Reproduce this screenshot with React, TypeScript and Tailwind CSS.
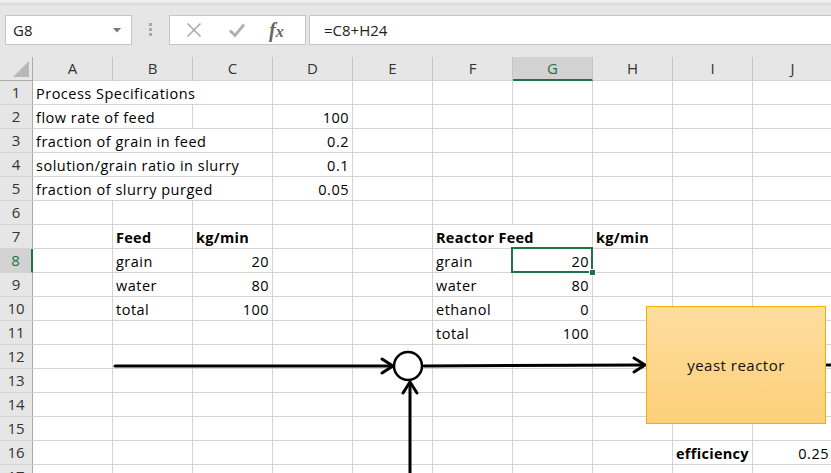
import React from 'react'

type Cell = {
  col: number
  span?: number
  text: string
  align?: 'left' | 'right'
  bold?: boolean
}

const COLS = ['A', 'B', 'C', 'D', 'E', 'F', 'G', 'H', 'I', 'J']

const rows: Record<number, Cell[]> = {
  1: [{ col: 0, span: 3, text: 'Process Specifications' }],
  2: [
    { col: 0, span: 2, text: 'flow rate of feed' },
    { col: 3, text: '100', align: 'right' },
  ],
  3: [
    { col: 0, span: 3, text: 'fraction of grain in feed' },
    { col: 3, text: '0.2', align: 'right' },
  ],
  4: [
    { col: 0, span: 3, text: 'solution/grain ratio in slurry' },
    { col: 3, text: '0.1', align: 'right' },
  ],
  5: [
    { col: 0, span: 3, text: 'fraction of slurry purged' },
    { col: 3, text: '0.05', align: 'right' },
  ],
  7: [
    { col: 1, text: 'Feed', bold: true },
    { col: 2, text: 'kg/min', bold: true },
    { col: 5, span: 2, text: 'Reactor Feed', bold: true },
    { col: 7, text: 'kg/min', bold: true },
  ],
  8: [
    { col: 1, text: 'grain' },
    { col: 2, text: '20', align: 'right' },
    { col: 5, text: 'grain' },
    { col: 6, text: '20', align: 'right' },
  ],
  9: [
    { col: 1, text: 'water' },
    { col: 2, text: '80', align: 'right' },
    { col: 5, text: 'water' },
    { col: 6, text: '80', align: 'right' },
  ],
  10: [
    { col: 1, text: 'total' },
    { col: 2, text: '100', align: 'right' },
    { col: 5, text: 'ethanol' },
    { col: 6, text: '0', align: 'right' },
  ],
  11: [
    { col: 5, text: 'total' },
    { col: 6, text: '100', align: 'right' },
  ],
  16: [
    { col: 8, text: 'efficiency', bold: true },
    { col: 9, text: '0.25', align: 'right' },
  ],
}

function SheetRow({ n }: { n: number }) {
  const cells = rows[n] ?? []
  const out: React.ReactNode[] = []
  const selected = n === 8
  out.push(
    <div
      key="h"
      className={`flex items-center justify-center border-b border-[#d4d4d4] ${
        selected
          ? 'border-r-2 border-r-[#217346] bg-[#d2d2d2] text-[#217346]'
          : 'border-r border-r-[#ababab] bg-[#e6e6e6] text-[#333]'
      } font-['Open_Sans',sans-serif] text-[15px]`}
    >
      {n}
    </div>
  )
  let c = 0
  while (c < 10) {
    const cell = cells.find((x) => x.col === c)
    const span = cell?.span ?? 1
    out.push(
      <div
        key={c}
        style={span > 1 ? { gridColumn: `span ${span}` } : undefined}
        className={`flex items-center overflow-visible whitespace-nowrap border-b border-r border-[#d4d4d4] bg-white px-[3px] pt-[3px] text-[14.5px] leading-none text-black ${
          cell?.align === 'right' ? 'justify-end' : 'justify-start'
        } ${cell?.bold ? 'font-bold tracking-[0.3px]' : 'tracking-[0.5px]'}`}
      >
        {cell?.text}
      </div>
    )
    c += span
  }
  return <>{out}</>
}

function Toolbar() {
  return (
    <div className="relative h-[57px] bg-[#e6e6e6]">
      <div className="h-[5px] bg-gradient-to-b from-[#f4f4f4] to-[#d9d9d9]" />
      <div className="absolute left-[5px] top-[15px] flex h-[30px] w-[127px] items-center justify-between border border-[#c6c6c6] bg-white pl-[7px] pr-[10px] font-['Open_Sans',sans-serif] text-[15px] text-[#222]">
        <span>G8</span>
        <svg width="8" height="5" viewBox="0 0 8 5">
          <path d="M0 0h8L4 4.5z" fill="#777" />
        </svg>
      </div>
      <div className="absolute left-[149px] top-[23px] flex flex-col gap-[2px]">
        <div className="h-[3px] w-[3px] bg-[#a8a8a8]" />
        <div className="h-[3px] w-[3px] bg-[#a8a8a8]" />
        <div className="h-[3px] w-[3px] bg-[#a8a8a8]" />
      </div>
      <div className="absolute left-[169px] top-[15px] flex h-[30px] w-[137px] items-center border border-[#c6c6c6] bg-white">
        <svg className="ml-[16px]" width="16" height="16" viewBox="0 0 16 16">
          <path d="M1.5 1.5L14.5 14.5M14.5 1.5L1.5 14.5" stroke="#a8a8a8" strokeWidth="1.5" />
        </svg>
        <svg className="ml-[26px]" width="18" height="16" viewBox="0 0 18 16">
          <path d="M2 8.5L7 13.5L16 2.5" stroke="#b0b0b0" strokeWidth="2.8" fill="none" />
        </svg>
        <span className="ml-[23px] font-['Liberation_Serif',serif] text-[20px] font-bold italic leading-none text-[#666]">
          f<span className="text-[16px]">x</span>
        </span>
      </div>
      <div className="absolute left-[309px] right-0 top-[15px] flex h-[30px] items-center border-y border-l border-[#c6c6c6] bg-white pl-[14px] font-['Open_Sans',sans-serif] text-[15px] text-[#222]">
        =C8+H24
      </div>
    </div>
  )
}

export default function App() {
  const rowNums = Array.from({ length: 17 }, (_, i) => i + 1)
  return (
    <div className="relative h-[473px] w-[831px] overflow-hidden bg-[#e6e6e6] font-['Open_Sans',sans-serif]">
      <Toolbar />
      <div className="grid grid-cols-[33px_repeat(10,80px)] auto-rows-[24px]">
        <div className="relative border-b border-r border-[#ababab] bg-[#e6e6e6]">
          <svg className="absolute left-[13px] top-[4px]" width="17" height="17" viewBox="0 0 17 17">
            <path d="M0 16L16 0V16z" fill="#b8b8b8" />
          </svg>
        </div>
        {COLS.map((c) => (
          <div
            key={c}
            className={`flex items-center justify-center border-r border-[#c4c4c4] font-['Open_Sans',sans-serif] text-[15px] ${
              c === 'G'
                ? 'border-b-2 border-b-[#217346] bg-[#d2d2d2] text-[#217346]'
                : 'border-b border-b-[#d4d4d4] bg-[#e6e6e6] text-[#333]'
            }`}
          >
            {c}
          </div>
        ))}
        {rowNums.map((n) => (
          <SheetRow key={n} n={n} />
        ))}
      </div>

      {/* active cell G8 */}
      <div className="pointer-events-none absolute left-[511px] top-[247px] h-[26px] w-[82px] border-2 border-[#217346]" />
      <div className="pointer-events-none absolute left-[589px] top-[269px] h-[7px] w-[7px] border border-white bg-[#217346]" />

      {/* flow diagram */}
      <svg className="pointer-events-none absolute left-0 top-0" width="831" height="473" viewBox="0 0 831 473">
        <g stroke="#000" strokeWidth="3" fill="none" strokeLinecap="round" strokeLinejoin="round">
          <path d="M115 366H392" />
          <path d="M382 359L393 366L382 373" />
          <path d="M424 366L644 365" />
          <path d="M634 358L645 365L634 372" />
          <path d="M410 475V383" />
          <path d="M403 393L410 382L417 393" />
          <path d="M827 365H834" />
        </g>
        <circle cx="408" cy="366" r="14" fill="#fff" stroke="#000" strokeWidth="2.5" />
      </svg>
      <div className="absolute left-[646px] top-[306px] flex h-[118px] w-[180px] items-center justify-center border border-[#f0b400] bg-gradient-to-b from-[#fedd9e] to-[#fcd07a] text-[15px] tracking-[0.5px] text-[#111]">
        yeast reactor
      </div>
    </div>
  )
}
